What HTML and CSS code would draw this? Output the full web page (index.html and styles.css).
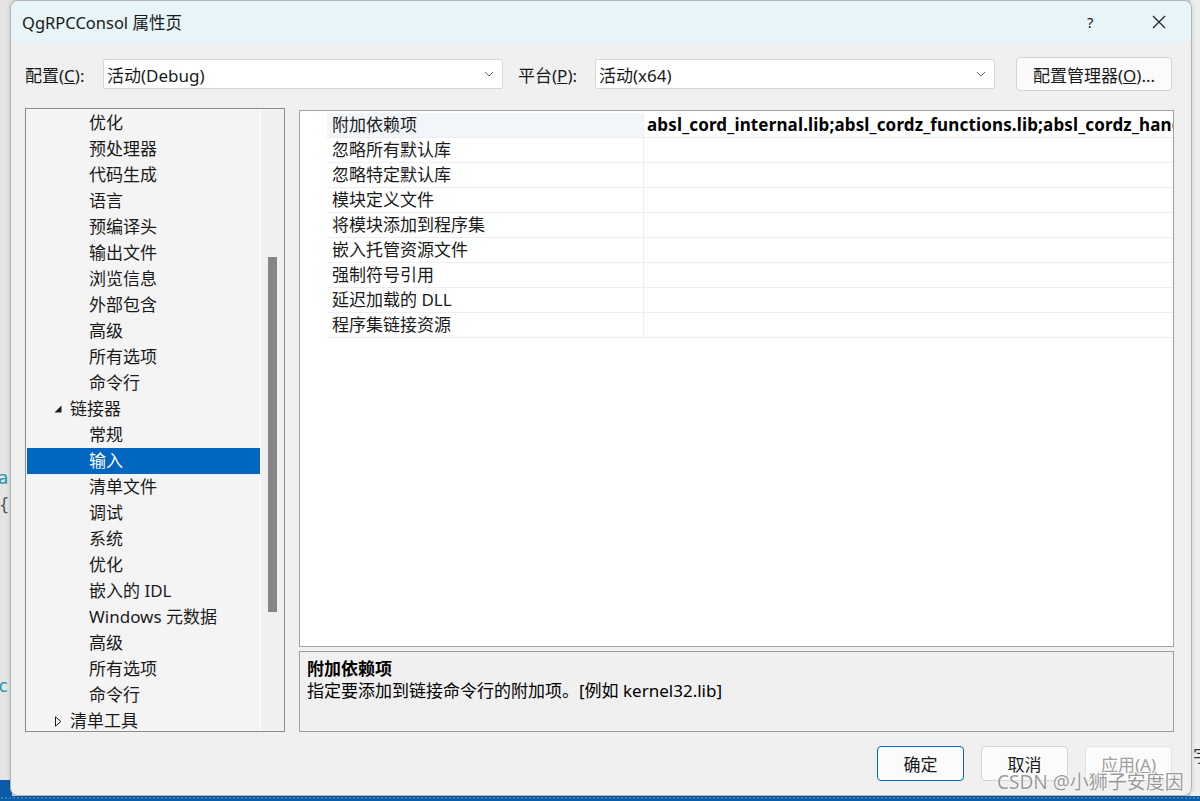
FILE: index.html
```html
<!DOCTYPE html>
<html lang="zh-CN">
<head>
<meta charset="utf-8">
<title>QgRPCConsol 属性页</title>
<link rel="stylesheet" href="styles.css">
</head>
<body>
<div class="desk">
  <div class="bg-editor">
    <span class="frag frag-a">a</span>
    <span class="frag frag-b">{</span>
    <span class="frag frag-c">c</span>
  </div>
  <div class="taskbar-left"></div>
  <div class="taskbar"></div>
  <div class="side-right"><span class="side-char">字</span></div>

  <div class="dialog">
    <div class="titlebar">
      <span class="title">QgRPCConsol 属性页</span>
      <span class="tb-help">?</span>
      <span class="tb-close">
        <svg width="14" height="14" viewBox="0 0 14 14"><path d="M1 1L13 13M13 1L1 13" stroke="#222" stroke-width="1.2" fill="none"/></svg>
      </span>
    </div>

    <div class="config-row">
      <span class="lbl lbl-config">配置(<u>C</u>):</span>
      <div class="combo">
        <span class="combo-text">活动(Debug)</span>
        <svg class="chev" width="10" height="6" viewBox="0 0 10 6"><path d="M1 1L5 5L9 1" stroke="#666" stroke-width="1" fill="none"/></svg>
      </div>
      <span class="lbl lbl-platform">平台(<u>P</u>):</span>
      <div class="combo">
        <span class="combo-text">活动(x64)</span>
        <svg class="chev" width="10" height="6" viewBox="0 0 10 6"><path d="M1 1L5 5L9 1" stroke="#666" stroke-width="1" fill="none"/></svg>
      </div>
      <button class="btn btn-mgr">配置管理器(<u>O</u>)...</button>
    </div>

    <div class="main">
      <div class="tree">
        <div class="tree-rows">
          <div class="trow child">优化</div>
          <div class="trow child">预处理器</div>
          <div class="trow child">代码生成</div>
          <div class="trow child">语言</div>
          <div class="trow child">预编译头</div>
          <div class="trow child">输出文件</div>
          <div class="trow child">浏览信息</div>
          <div class="trow child">外部包含</div>
          <div class="trow child">高级</div>
          <div class="trow child">所有选项</div>
          <div class="trow child">命令行</div>
          <div class="trow parent">
            <svg class="arrow" width="8" height="8" viewBox="0 0 8 8"><path d="M7.5 0.5V7.5H0.5Z" fill="#1a1a1a"/></svg>
            <span>链接器</span>
          </div>
          <div class="trow child">常规</div>
          <div class="trow child selected">输入</div>
          <div class="trow child">清单文件</div>
          <div class="trow child">调试</div>
          <div class="trow child">系统</div>
          <div class="trow child">优化</div>
          <div class="trow child">嵌入的 IDL</div>
          <div class="trow child">Windows 元数据</div>
          <div class="trow child">高级</div>
          <div class="trow child">所有选项</div>
          <div class="trow child">命令行</div>
          <div class="trow parent">
            <svg class="arrow" width="8" height="11" viewBox="0 0 8 11"><path d="M1.5 0.8V10.2L6.8 5.5Z" fill="none" stroke="#1a1a1a" stroke-width="1"/></svg>
            <span>清单工具</span>
          </div>
        </div>
        <div class="vscroll"><div class="thumb"></div></div>
      </div>

      <div class="right">
        <div class="grid">
          <div class="grow first">
            <div class="gm"></div>
            <div class="gn">附加依赖项</div>
            <div class="gv">absl_cord_internal.lib;absl_cordz_functions.lib;absl_cordz_handle.lib;absl_cordz_info.lib</div>
          </div>
          <div class="grow"><div class="gm"></div><div class="gn">忽略所有默认库</div><div class="gv"></div></div>
          <div class="grow"><div class="gm"></div><div class="gn">忽略特定默认库</div><div class="gv"></div></div>
          <div class="grow"><div class="gm"></div><div class="gn">模块定义文件</div><div class="gv"></div></div>
          <div class="grow"><div class="gm"></div><div class="gn">将模块添加到程序集</div><div class="gv"></div></div>
          <div class="grow"><div class="gm"></div><div class="gn">嵌入托管资源文件</div><div class="gv"></div></div>
          <div class="grow"><div class="gm"></div><div class="gn">强制符号引用</div><div class="gv"></div></div>
          <div class="grow"><div class="gm"></div><div class="gn">延迟加载的 DLL</div><div class="gv"></div></div>
          <div class="grow"><div class="gm"></div><div class="gn">程序集链接资源</div><div class="gv"></div></div>
        </div>
        <div class="desc">
          <div class="desc-title">附加依赖项</div>
          <div class="desc-text">指定要添加到链接命令行的附加项。[例如 kernel32.lib]</div>
        </div>
      </div>
    </div>

    <div class="buttons">
      <button class="btn btn-ok">确定</button>
      <button class="btn">取消</button>
      <button class="btn btn-disabled">应用(<u>A</u>)</button>
    </div>
  </div>

  <div class="watermark">CSDN @小狮子安度因</div>
</div>
</body>
</html>
```

FILE: styles.css
```css
html, body {
  margin: 0;
  padding: 0;
}

body {
  width: 1200px;
  height: 801px;
  overflow: hidden;
  font-family: "Noto Sans", "Noto Sans CJK SC", sans-serif;
  font-size: 17px;
  color: #1a1a1a;
}

.desk {
  position: relative;
  width: 1200px;
  height: 801px;
  overflow: hidden;
  background: #dadada;
}

/* background editor fragments (desktop content behind the dialog) */
.bg-editor {
  position: absolute;
  left: 0;
  top: 0;
  width: 12px;
  height: 801px;
  background: #e4e4e4;
}

.frag {
  position: absolute;
  font-family: "DejaVu Sans Mono", monospace;
  font-size: 17px;
  color: #2b91af;
  line-height: 20px;
}

.frag-a { left: -2px; top: 468px; }
.frag-b { left: -1px; top: 495px; color: #555; }
.frag-c { left: -2px; top: 676px; }

.taskbar-left {
  position: absolute;
  left: 0;
  top: 780px;
  width: 12px;
  height: 21px;
  background: #0b5ca8;
}

.taskbar {
  position: absolute;
  left: 0;
  bottom: 0;
  width: 1200px;
  height: 5px;
  background-color: #0b5ca8;
  background-image: radial-gradient(circle, #3a7fc0 0.8px, transparent 1.2px);
  background-size: 4px 4px;
}

.side-right {
  position: absolute;
  right: 0;
  top: 0;
  width: 10px;
  height: 796px;
  background: #eeeeee;
  border-left: 1px solid #c8c8c8;
}

.side-char {
  position: absolute;
  left: 3px;
  top: 742px;
  font-size: 17px;
  color: #333;
}

/* dialog */
.dialog {
  position: relative;
  z-index: 2;
  margin-left: 10px;
  width: 1182px;
  height: 796px;
  box-sizing: border-box;
  border: 1px solid #b4b4b4;
  border-radius: 8px;
  background: #f0f0f0;
  overflow: hidden;
  display: flex;
  flex-direction: column;
  box-shadow: 0 0 4px rgba(0, 0, 0, 0.15);
}

.titlebar {
  height: 41px;
  flex: none;
  display: flex;
  align-items: center;
  padding-left: 11px;
  background: #e7f4f8;
}

.title {
  font-size: 16.5px;
  color: #1a1a1a;
}

.tb-help {
  margin-left: auto;
  font-size: 15px;
  color: #222;
  width: 10px;
}

.tb-close {
  margin-left: 55px;
  margin-right: 25px;
  display: flex;
  align-items: center;
}

.config-row {
  margin-top: 15px;
  height: 34px;
  display: flex;
  align-items: center;
  padding-left: 14px;
  flex: none;
}

.lbl {
  white-space: nowrap;
}

.lbl-config {
  width: 78px;
}

.lbl-platform {
  width: 77px;
  margin-left: 15px;
}

.combo {
  width: 400px;
  height: 30px;
  box-sizing: border-box;
  border: 1px solid #d6d6d6;
  border-radius: 2px;
  background: #fff;
  display: flex;
  align-items: center;
  padding-left: 3px;
  padding-right: 8px;
}

.combo-text {
  flex: 1;
}

.btn {
  font-family: "Noto Sans", "Noto Sans CJK SC", sans-serif;
  font-size: 17px;
  color: #1a1a1a;
  background: #fbfbfb;
  border: 1px solid #d4d4d4;
  border-radius: 4px;
  height: 35px;
  padding: 0;
  box-sizing: border-box;
}

.btn-mgr {
  margin-left: 21px;
  width: 156px;
  height: 34px;
}

.main {
  margin-top: 17px;
  padding-left: 14px;
  display: flex;
  gap: 14px;
  height: 624px;
  flex: none;
}

.tree {
  width: 260px;
  height: 624px;
  box-sizing: border-box;
  border: 1px solid #8c8c96;
  background: #f4f4f4;
  display: flex;
}

.tree-rows {
  flex: 1;
  overflow: hidden;
  padding-top: 1px;
}

.trow {
  height: 26px;
  line-height: 26px;
  white-space: nowrap;
  display: flex;
  align-items: center;
}

.trow.child {
  padding-left: 63px;
}

.trow.parent {
  padding-left: 28px;
}

.trow.parent .arrow {
  width: 8px;
  margin-right: 8px;
}

.trow.selected {
  margin-left: 1px;
  padding-left: 62px;
  background: #0067c0;
  color: #fff;
}

.vscroll {
  width: 24px;
  background: #f0f0f0;
  border-left: 1px solid #fbfbfb;
  padding-top: 148px;
  padding-left: 7px;
  box-sizing: border-box;
}

.thumb {
  width: 9px;
  height: 355px;
  background: #858585;
}

.right {
  width: 875px;
  padding-top: 2px;
  display: flex;
  flex-direction: column;
  gap: 4px;
}

.grid {
  height: 537px;
  box-sizing: border-box;
  border: 1px solid #a0a0a0;
  background: #fff;
  padding-top: 2px;
}

.grow {
  display: flex;
  height: 25px;
}

.gm {
  width: 27px;
  flex: none;
}

.gn {
  width: 317px;
  flex: none;
  box-sizing: border-box;
  padding-left: 5px;
  line-height: 24px;
  border-right: 1px solid #eceef3;
  border-bottom: 1px solid #eceef3;
  white-space: nowrap;
}

.grow.first .gn {
  background: #f2f5fa;
}

.gv {
  flex: 1;
  min-width: 0;
  padding-left: 3px;
  line-height: 24px;
  border-bottom: 1px solid #eceef3;
  white-space: nowrap;
  overflow: hidden;
  font-weight: 700;
  font-size: 17px;
  letter-spacing: 0.15px;
  color: #000;
}

.desc {
  height: 81px;
  box-sizing: border-box;
  border: 1px solid #a0a0a0;
  background: #f0f0f0;
  padding: 6px 7px 0;
}

.desc-title {
  font-weight: 700;
  line-height: 22px;
  color: #000;
}

.desc-text {
  line-height: 22px;
  color: #000;
}

.buttons {
  margin-top: 14px;
  display: flex;
  justify-content: flex-end;
  gap: 17px;
  padding-right: 19px;
  flex: none;
}

.buttons .btn {
  width: 87px;
}

.btn-ok {
  border: 1px solid #0067c0;
}

.btn-disabled {
  color: #a0a0a0;
  border-color: #e2e2e2;
}

.watermark {
  position: absolute;
  z-index: 3;
  left: 997px;
  top: 770px;
  font-size: 19px;
  line-height: 24px;
  color: rgba(120, 120, 120, 0.75);
  text-shadow: 0 0 2px #fff, 0 0 2px #fff;
  white-space: nowrap;
}
```
